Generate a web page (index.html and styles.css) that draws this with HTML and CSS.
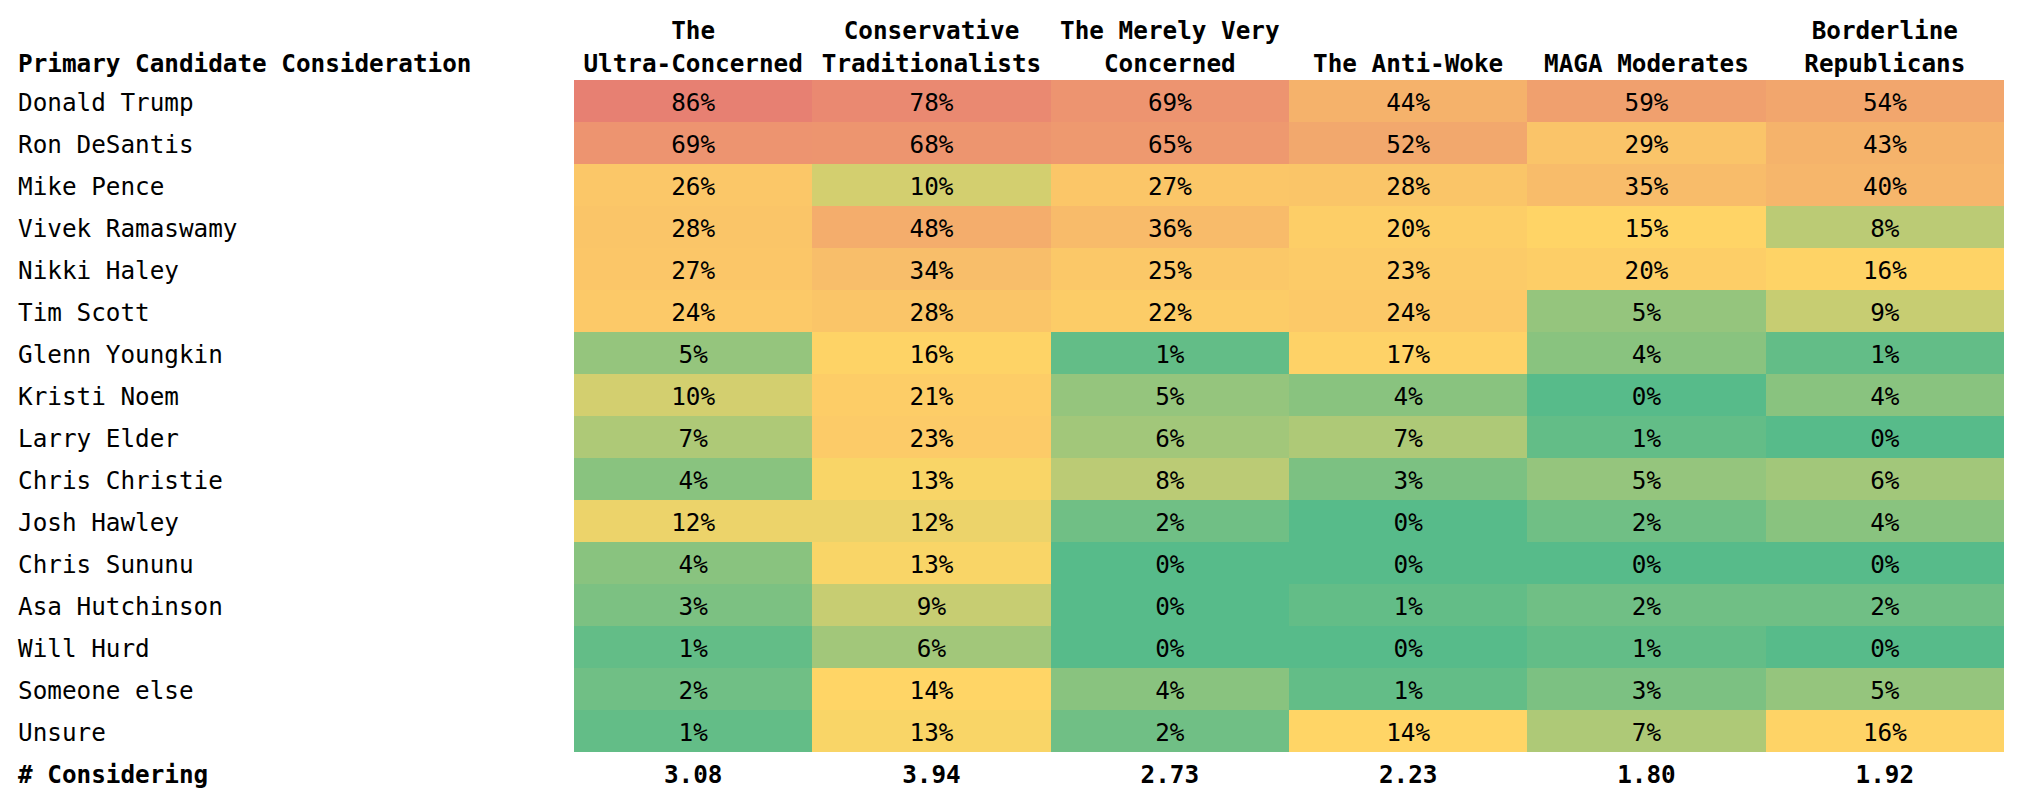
FILE: index.html
```html
<!DOCTYPE html>
<html>
<head>
<meta charset="utf-8">
<link rel="stylesheet" href="styles.css">
</head>
<body>
<table class="heat">
  <colgroup>
    <col class="c-label"><col class="c-data"><col class="c-data"><col class="c-data"><col class="c-data"><col class="c-data"><col class="c-data">
  </colgroup>
  <thead>
    <tr class="head">
      <th class="lbl">Primary Candidate Consideration</th>
      <th>The<br>Ultra-Concerned</th>
      <th>Conservative<br>Traditionalists</th>
      <th>The Merely Very<br>Concerned</th>
      <th>The Anti-Woke</th>
      <th>MAGA Moderates</th>
      <th>Borderline<br>Republicans</th>
    </tr>
  </thead>
  <tbody>
    <tr><td class="lbl">Donald Trump</td><td class="v">86%</td><td class="v">78%</td><td class="v">69%</td><td class="v">44%</td><td class="v">59%</td><td class="v">54%</td></tr>
    <tr><td class="lbl">Ron DeSantis</td><td class="v">69%</td><td class="v">68%</td><td class="v">65%</td><td class="v">52%</td><td class="v">29%</td><td class="v">43%</td></tr>
    <tr><td class="lbl">Mike Pence</td><td class="v">26%</td><td class="v">10%</td><td class="v">27%</td><td class="v">28%</td><td class="v">35%</td><td class="v">40%</td></tr>
    <tr><td class="lbl">Vivek Ramaswamy</td><td class="v">28%</td><td class="v">48%</td><td class="v">36%</td><td class="v">20%</td><td class="v">15%</td><td class="v">8%</td></tr>
    <tr><td class="lbl">Nikki Haley</td><td class="v">27%</td><td class="v">34%</td><td class="v">25%</td><td class="v">23%</td><td class="v">20%</td><td class="v">16%</td></tr>
    <tr><td class="lbl">Tim Scott</td><td class="v">24%</td><td class="v">28%</td><td class="v">22%</td><td class="v">24%</td><td class="v">5%</td><td class="v">9%</td></tr>
    <tr><td class="lbl">Glenn Youngkin</td><td class="v">5%</td><td class="v">16%</td><td class="v">1%</td><td class="v">17%</td><td class="v">4%</td><td class="v">1%</td></tr>
    <tr><td class="lbl">Kristi Noem</td><td class="v">10%</td><td class="v">21%</td><td class="v">5%</td><td class="v">4%</td><td class="v">0%</td><td class="v">4%</td></tr>
    <tr><td class="lbl">Larry Elder</td><td class="v">7%</td><td class="v">23%</td><td class="v">6%</td><td class="v">7%</td><td class="v">1%</td><td class="v">0%</td></tr>
    <tr><td class="lbl">Chris Christie</td><td class="v">4%</td><td class="v">13%</td><td class="v">8%</td><td class="v">3%</td><td class="v">5%</td><td class="v">6%</td></tr>
    <tr><td class="lbl">Josh Hawley</td><td class="v">12%</td><td class="v">12%</td><td class="v">2%</td><td class="v">0%</td><td class="v">2%</td><td class="v">4%</td></tr>
    <tr><td class="lbl">Chris Sununu</td><td class="v">4%</td><td class="v">13%</td><td class="v">0%</td><td class="v">0%</td><td class="v">0%</td><td class="v">0%</td></tr>
    <tr><td class="lbl">Asa Hutchinson</td><td class="v">3%</td><td class="v">9%</td><td class="v">0%</td><td class="v">1%</td><td class="v">2%</td><td class="v">2%</td></tr>
    <tr><td class="lbl">Will Hurd</td><td class="v">1%</td><td class="v">6%</td><td class="v">0%</td><td class="v">0%</td><td class="v">1%</td><td class="v">0%</td></tr>
    <tr><td class="lbl">Someone else</td><td class="v">2%</td><td class="v">14%</td><td class="v">4%</td><td class="v">1%</td><td class="v">3%</td><td class="v">5%</td></tr>
    <tr><td class="lbl">Unsure</td><td class="v">1%</td><td class="v">13%</td><td class="v">2%</td><td class="v">14%</td><td class="v">7%</td><td class="v">16%</td></tr>
  </tbody>
  <tfoot>
    <tr class="foot"><td class="lbl"># Considering</td><td>3.08</td><td>3.94</td><td>2.73</td><td>2.23</td><td>1.80</td><td>1.92</td></tr>
  </tfoot>
</table>
<script src="script.js"></script>
</body>
</html>
```

FILE: styles.css
```css
html, body {
  margin: 0;
  padding: 0;
  background: #ffffff;
}

body {
  font-family: "DejaVu Sans Mono", "Liberation Mono", monospace;
  font-size: 24.3px;
  color: #000000;
}

.heat {
  border-collapse: collapse;
  border-spacing: 0;
  table-layout: fixed;
  width: 2004px;
}

.c-label {
  width: 574px;
}

.c-data {
  width: 238.33px;
}

.heat th,
.heat td {
  padding: 0;
  text-align: center;
  white-space: nowrap;
}

.heat .head th {
  line-height: 33px;
  vertical-align: bottom;
  padding: 14px 0 0 0;
  font-weight: bold;
}

.heat tbody td,
.heat .foot td {
  line-height: 38px;
  padding: 4px 0 0 0;
  vertical-align: middle;
}

.heat .foot td {
  font-weight: bold;
}

.heat .lbl,
.heat .head .lbl,
.heat tbody .lbl,
.heat .foot .lbl {
  text-align: left;
  padding-left: 18px;
}
```

FILE: script.js
```js
(function () {
  var g = [87, 187, 138], y = [255, 214, 102], r = [230, 124, 115];
  var mid = 13.5, max = 89;
  function mix(a, b, t) {
    return [0, 1, 2].map(function (i) { return Math.round(a[i] + (b[i] - a[i]) * t); });
  }
  document.querySelectorAll('td.v').forEach(function (td) {
    var v = parseFloat(td.textContent);
    var c = v <= mid ? mix(g, y, v / mid) : mix(y, r, Math.min(1, (v - mid) / (max - mid)));
    td.style.backgroundColor = 'rgb(' + c.join(',') + ')';
  });
})();
```
